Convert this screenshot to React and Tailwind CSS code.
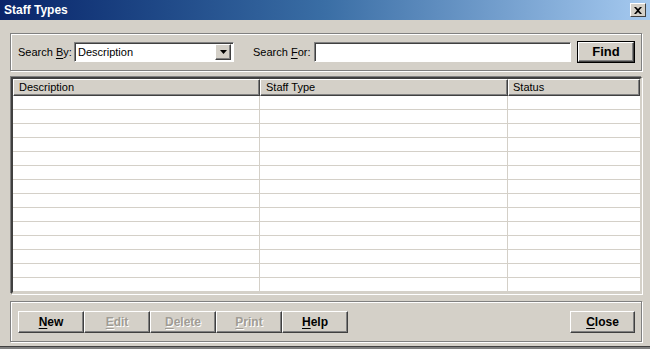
import React from "react";

const raised =
  "border border-t-white border-l-white border-r-[#404040] border-b-[#404040] shadow-[inset_-1px_-1px_0_#808080]";

function Btn({ children, disabled, className = "", def }) {
  return (
    <div
      className={`${def ? "border border-black" : ""} ${className}`}
    >
      <div
        className={`${raised} h-full flex items-center justify-center font-bold text-[12px] ${
          disabled ? "text-[#a09c94] [text-shadow:1px_1px_0_#fff]" : "text-black"
        }`}
      >
        {children}
      </div>
    </div>
  );
}

const U = ({ children }) => <span className="underline underline-offset-2">{children}</span>;

export default function App() {
  const rows = Array.from({ length: 14 });
  return (
    <div
      className="w-[650px] h-[349px] bg-[#d4d0c8] flex flex-col overflow-hidden"
      style={{ fontFamily: '"Liberation Sans", Arial, sans-serif' }}
    >
      {/* Title bar */}
      <div className="h-[20px] bg-gradient-to-r from-[#0a246a] via-[#3a6ea5] to-[#a6caf0] flex items-center pl-[4px] pr-[4px] shrink-0">
        <span className="text-white font-bold text-[12px]">Staff Types</span>
        <div className="ml-auto w-[16px] h-[14px] bg-[#d4d0c8] border border-t-white border-l-white border-r-[#404040] border-b-[#404040] flex items-center justify-center">
          <svg width="8" height="7" viewBox="0 0 8 7">
            <path d="M0 0 L2 0 L4 2 L6 0 L8 0 L5 3.5 L8 7 L6 7 L4 5 L2 7 L0 7 L3 3.5 Z" fill="black" />
          </svg>
        </div>
      </div>

      <div className="flex flex-col pl-[10px] pr-[8px] pt-[13px]">
        {/* Search group */}
        <div className="h-[38px] border border-[#808080] shadow-[inset_1px_1px_0_#fff,1px_1px_0_#fff] flex items-center pl-[7px] pr-[6px] text-[11px] text-black">
          <span className="w-[56px]">
            Search <U>B</U>y:
          </span>
          <div className="w-[160px] h-[20px] bg-white border border-t-[#808080] border-l-[#808080] border-r-white border-b-white shadow-[inset_1px_1px_0_#404040] flex items-center pl-[3px] pr-[2px]">
            <span className="flex-1">Description</span>
            <div className="w-[16px] h-[16px] bg-[#d4d0c8] border border-t-white border-l-white border-r-[#404040] border-b-[#404040] shadow-[inset_-1px_-1px_0_#808080] flex items-center justify-center">
              <svg width="7" height="4" viewBox="0 0 7 4">
                <path d="M0 0 L7 0 L3.5 4 Z" fill="black" />
              </svg>
            </div>
          </div>
          <span className="ml-[19px] w-[61px]">
            Search <U>F</U>or:
          </span>
          <div className="w-[257px] h-[20px] bg-white border border-t-[#808080] border-l-[#808080] border-r-white border-b-white shadow-[inset_1px_1px_0_#404040]" />
          <Btn def className="ml-[6px] w-[58px] h-[22px]">
            <span className="text-[13px]">Find</span>
          </Btn>
        </div>

        {/* List */}
        <div className="mt-[6px] ml-[1px] h-[217px] bg-white border-2 border-t-[#404040] border-l-[#404040] border-r-[#d4d0c8] border-b-[#d4d0c8] shadow-[-1px_-1px_0_#808080,1px_1px_0_#fff] flex flex-col overflow-hidden">
          <div className="h-[17px] flex shrink-0 text-[11px] text-black">
            <div className={`${raised} bg-[#d4d0c8] w-[247px] pl-[5px] flex items-center`}>Description</div>
            <div className={`${raised} bg-[#d4d0c8] w-[248px] pl-[5px] flex items-center`}>Staff Type</div>
            <div className={`${raised} bg-[#d4d0c8] flex-1 pl-[4px] flex items-center`}>Status</div>
          </div>
          {rows.map((_, i) => (
            <div key={i} className="h-[14px] flex shrink-0 border-b border-[#d4d0c8]">
              <div className="w-[247px] border-r border-[#d4d0c8]" />
              <div className="w-[248px] border-r border-[#d4d0c8]" />
              <div className="flex-1" />
            </div>
          ))}
        </div>

        {/* Bottom group */}
        <div className="mt-[7px] h-[41px] border border-[#808080] shadow-[inset_1px_1px_0_#fff,1px_1px_0_#fff] flex items-center pl-[7px] pr-[6px]">
          <div className="flex">
            <Btn className="w-[66px] h-[22px]">
              <U>N</U>ew
            </Btn>
            <Btn disabled className="w-[66px] h-[22px]">
              <U>E</U>dit
            </Btn>
            <Btn disabled className="w-[66px] h-[22px]">
              <U>D</U>elete
            </Btn>
            <Btn disabled className="w-[66px] h-[22px]">
              <U>P</U>rint
            </Btn>
            <Btn className="w-[66px] h-[22px]">
              <U>H</U>elp
            </Btn>
          </div>
          <Btn className="ml-auto w-[65px] h-[22px]">
            <U>C</U>lose
          </Btn>
        </div>
      </div>
      <div className="mt-auto h-[3px] border-t border-[#404040] bg-[#808080] mb-[0px]" />
    </div>
  );
}
